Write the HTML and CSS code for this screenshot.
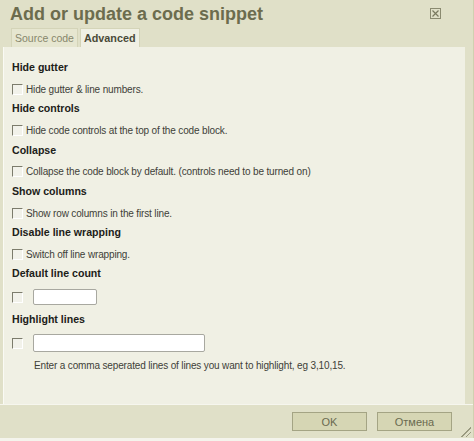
FILE: index.html
```html
<!DOCTYPE html>
<html lang="en">
<head>
    <meta charset="UTF-8">
    <title>Add or update a code snippet</title>
    <link rel="stylesheet" href="styles.css">
</head>
<body>
    <div class="dialog">
        <div class="titlebar">
            <h1>Add or update a code snippet</h1>
            <span class="close">
                <svg width="11" height="11" viewBox="0 0 11 11">
                    <rect x="0.5" y="0.5" width="10" height="10" fill="none" stroke="#8a8a70"/>
                    <path d="M2.5 2.5 L8.5 8.5 M8.5 2.5 L2.5 8.5" stroke="#7a7a60" stroke-width="1.2"/>
                </svg>
            </span>
        </div>

        <div class="tabs">
            <span class="tab">Source code</span>
            <span class="tab active">Advanced</span>
        </div>

        <div class="panel">
            <div class="option">
                <h2>Hide gutter</h2>
                <label><span class="check"></span>Hide gutter &amp; line numbers.</label>
            </div>
            <div class="option">
                <h2>Hide controls</h2>
                <label><span class="check"></span>Hide code controls at the top of the code block.</label>
            </div>
            <div class="option">
                <h2>Collapse</h2>
                <label><span class="check"></span>Collapse the code block by default. (controls need to be turned on)</label>
            </div>
            <div class="option">
                <h2>Show columns</h2>
                <label><span class="check"></span>Show row columns in the first line.</label>
            </div>
            <div class="option">
                <h2>Disable line wrapping</h2>
                <label><span class="check"></span>Switch off line wrapping.</label>
            </div>
            <div class="option">
                <h2>Default line count</h2>
                <label class="with-input"><span class="check"></span><input type="text" class="short"></label>
            </div>
            <div class="option">
                <h2>Highlight lines</h2>
                <label class="with-input"><span class="check"></span><input type="text" class="long"></label>
                <p class="hint">Enter a comma seperated lines of lines you want to highlight, eg 3,10,15.</p>
            </div>
        </div>

        <div class="footer">
            <button class="button">OK</button>
            <button class="button">Отмена</button>
            <span class="grip"></span>
        </div>
    </div>
</body>
</html>
```

FILE: styles.css
```css
body {
    margin: 0;
    padding: 0;
    background: #f4f4ec;
    font-family: "Liberation Sans", Arial, sans-serif;
}

.dialog {
    width: 474px;
    height: 438px;
    background: #e0e0c8;
    border-right: 1px solid #d0d0b0;
    box-sizing: border-box;
    position: relative;
    display: flex;
    flex-direction: column;
}

.titlebar {
    height: 28px;
    display: flex;
    align-items: center;
    justify-content: space-between;
    padding: 0 32px 0 10px;
}

h1 {
    margin: 0;
    font-size: 18px;
    font-weight: bold;
    color: #6c6c4e;
}

.close {
    display: flex;
    margin-top: -2px;
}

.tabs {
    display: flex;
    gap: 2px;
    padding-left: 11px;
    height: 19px;
}

.tab {
    font-size: 10.5px;
    color: #86866c;
    background: #e6e6d0;
    padding: 3px 3px 0;
    border: 1px solid #d4d4b8;
    border-bottom: none;
}

.tab.active {
    background: #f0f0e4;
    color: #4a4a38;
    font-weight: bold;
    font-size: 10.8px;
}

.panel {
    flex: 1;
    background: #f0f0e4;
    margin: 0 8px 0 3px;
    padding: 11px 8px 0;
    border-left: 1px solid #fafaf4;
}

.option h2 {
    margin: 0;
    font-size: 10.6px;
    font-weight: bold;
    color: #202018;
    height: 21px;
    line-height: 19px;
}

.option label {
    display: flex;
    align-items: center;
    height: 20.3px;
    font-size: 10px;
    letter-spacing: -0.15px;
    color: #404038;
    line-height: 15px;
}

.check {
    width: 9px;
    height: 9px;
    border-top: 1px solid #7c7c6c;
    border-left: 1px solid #7c7c6c;
    border-right: 1px solid #ffffff;
    border-bottom: 1px solid #ffffff;
    background: #f2f2ea;
    margin: 0 3px 0 0;
    flex-shrink: 0;
}

.option label.with-input {
    height: 24px;
    margin-bottom: 1px;
}

input {
    height: 16px;
    border: 1px solid #a8a8a0;
    border-radius: 2px;
    background: #ffffff;
    padding: 0;
    margin-left: 7px;
    box-sizing: border-box;
}

input.short {
    width: 64px;
}

input.long {
    width: 172px;
    height: 18px;
}

.hint {
    margin: 5px 0 0 22px;
    font-size: 10px;
    letter-spacing: -0.15px;
    color: #404038;
}

.footer {
    height: 33px;
    border-top: 1px solid #f6f6ee;
    display: flex;
    align-items: center;
    justify-content: flex-end;
    gap: 10px;
    padding-right: 21px;
    position: relative;
}

.button {
    width: 75px;
    height: 19px;
    background: #d6d6b4;
    border: 1px solid #a4a484;
    color: #6a6a50;
    font-family: "Liberation Sans", Arial, sans-serif;
    font-size: 11px;
    padding: 0;
}

.grip {
    position: absolute;
    right: 2px;
    bottom: 1px;
    width: 10px;
    height: 10px;
    background: linear-gradient(135deg, transparent 45%, #9a9a80 45%, #9a9a80 55%, transparent 55%, transparent 70%, #9a9a80 70%, #9a9a80 78%, transparent 78%);
}
```
